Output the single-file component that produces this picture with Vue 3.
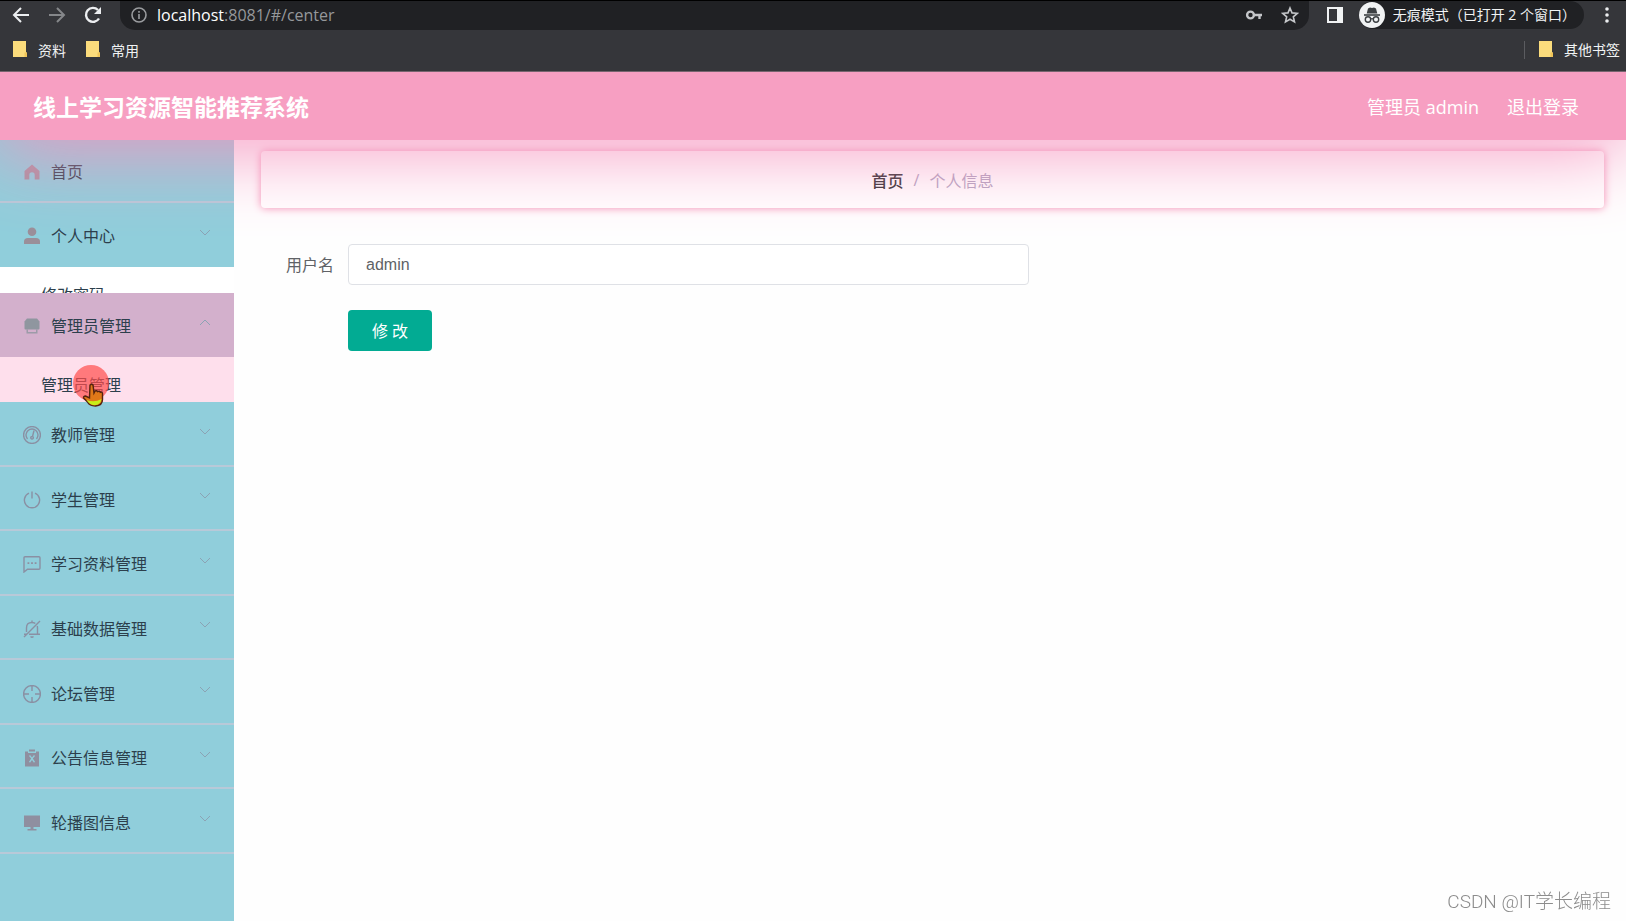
<template>
  <div class="page">
    <div class="browser">
      <div class="toolbar">
        <button class="tool" aria-label="后退">
          <svg width="18" height="18" viewBox="0 0 18 18" stroke="#eceef0" stroke-width="2">
            <path d="M17 9H2M9 2L2 9l7 7" />
          </svg>
        </button>
        <button class="tool" aria-label="前进">
          <svg width="18" height="18" viewBox="0 0 18 18" stroke="#85878a" stroke-width="2">
            <path d="M1 9h15M9 2l7 7-7 7" />
          </svg>
        </button>
        <button class="tool" aria-label="刷新">
          <svg width="18" height="18" viewBox="0 0 18 18">
            <path d="M15 12.5A7 7 0 1 1 14 4" stroke="#eceef0" stroke-width="2.4" />
            <path d="M17 1v7h-7z" fill="#eceef0" />
          </svg>
        </button>
        <div class="address">
          <svg width="16" height="16" viewBox="0 0 16 16" stroke="#9a9c9f" stroke-width="1.6">
            <circle cx="8" cy="8" r="7" />
            <path d="M8 7v5M8 4v1.8" />
          </svg>
          <span class="url"><b>localhost</b>:8081/#/center</span>
          <button class="tool" aria-label="密码">
            <svg width="18" height="18" viewBox="0 0 18 18" stroke="#c4c6c9" stroke-width="2.4">
              <circle cx="5.5" cy="9" r="3.4" />
              <path d="M9 9h8M14.5 9v4" />
            </svg>
          </button>
          <button class="tool" aria-label="收藏">
            <svg width="18" height="18" viewBox="0 0 18 18" stroke="#c4c6c9" stroke-width="1.6">
              <path d="M9 2l2 4.900 5.300.4-4 3.500 1.200 5.100L9 13.200l-4.500 2.700 1.200-5.100-4-3.500L7 6.900z" />
            </svg>
          </button>
        </div>
        <button class="tool side-panel" aria-label="侧边栏">
          <svg width="18" height="18" viewBox="0 0 18 18">
            <rect x="2" y="2" width="14" height="14" stroke="#f1f3f4" stroke-width="2" />
            <path d="M11 2h5v14h-5z" fill="#f1f3f4" />
          </svg>
        </button>
        <button class="incognito">
          <svg width="26" height="26" viewBox="0 0 26 26">
            <circle cx="13" cy="13" r="13" fill="#f1f3f4" />
            <path d="M9 6.500l2-1 2 .6 2-.6 2 1 1.300 5H7.700z" fill="#3c4043" />
            <path d="M5 13h16" stroke="#3c4043" stroke-width="1.6" />
            <g stroke="#3c4043" stroke-width="1.4">
              <circle cx="9" cy="17.5" r="2.7" />
              <circle cx="17" cy="17.5" r="2.7" />
              <path d="M11.700 17q1.300-.8 2.600 0" />
            </g>
          </svg>
          无痕模式（已打开 2 个窗口）
        </button>
        <button class="tool menu-dots" aria-label="菜单">
          <svg width="6" height="18" viewBox="0 0 6 18">
            <g fill="#eceef0">
              <circle cx="3" cy="3" r="1.8" />
              <circle cx="3" cy="9" r="1.8" />
              <circle cx="3" cy="15" r="1.8" />
            </g>
          </svg>
        </button>
      </div>
      <div class="bookmarks">
        <a v-for="name in bookmarks" :key="name" href="#" :class="{ other: name === '其他书签' }">
          <svg width="14" height="17" viewBox="0 0 14 17">
            <path d="M0 0h13v11l1 1v4H0z" fill="#fbdc7c" />
            <path d="M11.500 11.500h2.500v4.500h-2.500z" fill="#efc458" />
          </svg>
          {{ name }}
        </a>
      </div>
    </div>

    <header class="header">
      <h1>线上学习资源智能推荐系统</h1>
      <span class="user">管理员 admin</span>
      <a href="#" class="logout">退出登录</a>
    </header>

    <div class="body">
      <aside class="sidebar">
        <a href="#" class="menu-item home">
          <svg class="icon" viewBox="0 0 18 18">
            <path d="M9 1.500L1.500 8v8.500h4.800v-4.600a2.700 2.700 0 0 1 5.400 0v4.600h4.800V8z" fill="#a9919f" />
          </svg>
          首页
        </a>
        <button class="menu-item open-item">
          <svg class="icon" viewBox="0 0 18 18">
            <g fill="#9a8f99">
              <circle cx="9" cy="4.800" r="4.300" />
              <path d="M1 17v-2.500q0-3.500 4-3.500h8q4 0 4 3.500V17z" />
            </g>
          </svg>
          个人中心
          <svg class="arrow" viewBox="0 0 10 6"><path d="M0 0l5 5 5-5" /></svg>
        </button>
        <div class="submenu closing"><a href="#">修改密码</a></div>
        <button class="menu-item open-item active">
          <svg class="icon" viewBox="0 0 18 18">
            <g fill="#8f969f">
              <path d="M4 1.500h10l2.500 3v7q0 1-1 1H2.500q-1 0-1-1v-7z" />
              <path d="M3.500 12.500h1.500V15h8v-2.500h1.500v4h-11z" opacity=".8" />
            </g>
          </svg>
          管理员管理
          <svg class="arrow" viewBox="0 0 10 6"><path d="M0 5l5-5 5 5" /></svg>
        </button>
        <div class="submenu opening">
          <a href="#">管理员管理</a>
          <svg class="pointer" width="38" height="46" viewBox="0 0 38 46">
            <circle cx="19" cy="19" r="18" fill="#ff4d4d" fill-opacity=".7" />
            <path
              d="M18 21q2-1.500 3 0l1 8 1-2q2-.8 2.500.6 2.300-1 2.800.7 2-.6 2.200 1.200v6q0 6-7 6.500-6 0-8-4l-4-4q0-2 2-2l4 2z"
              fill="#e07818"
              stroke="#54220e"
              stroke-width="1.400"
            />
            <path d="M14.500 36q8 3 15-1-1 6-7 6.200-5-.3-8-5.200z" fill="#c8ee18" />
          </svg>
        </div>
        <div class="menu-rest">
          <button v-for="item in menus" :key="item.name" class="menu-item">
            <svg class="icon" viewBox="0 0 18 18" stroke="#8a90a3" stroke-width="1.400">
              <path :d="item.line" />
              <path v-if="item.solid" :d="item.solid" fill="#8f8fa0" stroke="none" fill-rule="evenodd" />
            </svg>
            {{ item.name }}
            <svg class="arrow" viewBox="0 0 10 6"><path d="M0 0l5 5 5-5" /></svg>
          </button>
        </div>
      </aside>

      <main class="main">
        <nav class="breadcrumb">
          <a href="#">首页</a>
          <span class="slash">/</span>
          <span>个人信息</span>
        </nav>
        <form class="form" @submit.prevent>
          <label for="username">用户名</label>
          <input id="username" v-model="username" type="text" />
          <button type="submit">修 改</button>
        </form>
      </main>
    </div>
    <div class="watermark">CSDN @IT学长编程</div>
  </div>
</template>

<script setup>
import { ref } from "vue";

const username = ref("admin");

const bookmarks = ["资料", "常用", "其他书签"];

const menus = [
  {
    name: "教师管理",
    line: "M9 .6a8.400 8.400 0 1 1 0 16.800A8.400 8.400 0 0 1 9 .6zM4.500 13A6 6 0 1 1 13.500 13M9.500 10.500l1.500-6M9 10.500a1.300 1.300 0 1 0 .1 0",
  },
  {
    name: "学生管理",
    line: "M9 .5v7M6 2.200a7.600 7.600 0 1 0 6 0",
  },
  {
    name: "学习资料管理",
    line: "M2 1.800h14q1 0 1 1v10.400q0 1-1 1H4.500L1 17V2.800q0-1 1-1z",
    solid: "M4.500 7.200h1.800v1.800H4.500zM8.100 7.200h1.800v1.800H8.100zM11.700 7.200h1.800v1.800h-1.800z",
  },
  {
    name: "基础数据管理",
    line: "M1 17L17 1M3.500 12V8q0-5.500 5.500-5.500 2 0 3.300 1M14.200 6q.3.800.3 2v6.300H6M1 14.300h2.500M14.500 14.300H17M9 .5v2M7.500 16.500q1.500 1.300 3 0",
  },
  {
    name: "论坛管理",
    line: "M9 .6a8.400 8.400 0 1 1 0 16.800A8.400 8.400 0 0 1 9 .6zM9 .6v5.400M9 12v5.400M.6 9H6M12 9h5.400",
  },
  {
    name: "公告信息管理",
    line: "",
    solid: "M2 2.500h3V4h8V2.500h3V17.500H2zM6 .5h6v2H6zM6 7l2.200 2.600L6 12.800l1 1 2-2.800 2 2.800 1-1-2.200-3.200L12 7l-1-1-2 2.400L7 6z",
  },
  {
    name: "轮播图信息",
    line: "",
    solid: "M1 1.500h16v11.500H1zM7.500 13h3v2h-3zM4.500 15h9v1.500h-9z",
  },
];
</script>

<style>
body {
  margin: 0;
}
</style>

<style scoped>
.page {
  min-height: 100vh;
  display: flex;
  flex-direction: column;
  background: #fefefe;
  font-family: "Open Sans", "Noto Sans CJK SC", sans-serif;
  font-size: 16px;
}

a {
  color: inherit;
  text-decoration: none;
}

button {
  margin: 0;
  padding: 0;
  border: 0;
  background: none;
  font: inherit;
  color: inherit;
}

svg {
  display: block;
  flex: none;
  fill: none;
}

.browser {
  height: 71px;
  border-bottom: 1px solid #77656f;
  background: #35363a;
  color: #f1f3f4;
  font-size: 14px;
}

.toolbar {
  display: flex;
  align-items: center;
  height: 27px;
  padding: 0 16px 0 12px;
  border-top: 1px solid #000;
}

.toolbar > .tool {
  margin-right: 18px;
}

.address {
  flex: 1;
  display: flex;
  align-items: center;
  align-self: flex-start;
  height: 27px;
  padding: 0 10px 2px 11px;
  border-radius: 0 0 15px 15px;
  background: #202124;
}

.url {
  flex: 1;
  padding-left: 10px;
  font-size: 16px;
  line-height: 26px;
  color: #96989b;
}

.url b {
  font-weight: 400;
  color: #fff;
}

.address .tool {
  margin-left: 18px;
}

.toolbar > .side-panel {
  margin: 0 15px 0 17px;
}

.incognito {
  display: flex;
  align-items: center;
  gap: 8px;
  height: 28px;
  padding-right: 8px;
  border-radius: 14px;
  background: #202124;
  line-height: 26px;
  white-space: nowrap;
}

.toolbar > .menu-dots {
  margin: 0 0 0 20px;
}

.bookmarks {
  display: flex;
  align-items: center;
  gap: 20px;
  height: 43px;
  padding: 0 6px 0 13px;
}

.bookmarks a {
  display: flex;
  align-items: center;
  gap: 11px;
}

.bookmarks .other {
  margin-left: auto;
  padding-left: 14px;
  border-left: 1px solid #5b5c60;
  line-height: 18px;
}

.header {
  position: relative;
  z-index: 1;
  display: flex;
  align-items: center;
  height: 68px;
  padding: 0 47px 0 33px;
  background: #f79fc2;
  box-shadow: 0 4px 80px 4px #f590bc;
  clip-path: inset(0 0 -120px 0);
  color: #fff;
  font-size: 18px;
}

.header h1 {
  flex: 1;
  margin: 0;
  font-size: 23px;
  font-weight: 700;
}

.logout {
  margin-left: 28px;
}

.body {
  flex: 1;
  display: flex;
}

.sidebar {
  width: 234px;
  flex: none;
  background: #90cedb;
  color: #2c3f4c;
}

.menu-item {
  display: flex;
  align-items: center;
  gap: 10px;
  box-sizing: border-box;
  width: 100%;
  height: 64px;
  padding: 0 24px 0 23px;
  border-bottom: 2px solid #b8c9d8;
}

.home {
  height: 63px;
}

.open-item {
  border-bottom: 0;
}

.active {
  background: #d3b0cc;
}

.icon {
  width: 18px;
  height: 18px;
  margin-top: 2px;
}

.arrow {
  width: 10px;
  height: 6px;
  margin: 0 0 5px auto;
  stroke: #8ba3b4;
  overflow: visible;
}

.submenu {
  position: relative;
  line-height: 56px;
}

.submenu a {
  display: block;
  height: 100%;
  padding-left: 41px;
  overflow: hidden;
}

.closing {
  height: 26px;
  background: #fff;
}

.opening {
  height: 45px;
  background: #fedfec;
}

/* the click marker floats over the submenu entry */
.pointer {
  position: absolute;
  left: 72px;
  top: 7px;
  z-index: 2;
}

.menu-rest {
  display: grid;
  grid-auto-rows: 1fr;
  height: 452px;
}

.menu-rest .menu-item {
  height: auto;
  padding-top: 2px;
}

.main {
  flex: 1;
  padding: 11px 22px 0 27px;
}

.breadcrumb {
  display: flex;
  align-items: center;
  justify-content: center;
  height: 57px;
  border-radius: 4px;
  background: #fff;
  box-shadow: 0 0 8px #f58fb4;
  color: #b3a6c2;
}

.breadcrumb a {
  font-weight: 500;
  color: #303133;
}

.slash {
  margin: 0 10px;
}

.form {
  display: grid;
  grid-template-columns: 73px 1fr;
  align-items: center;
  gap: 25px 14px;
  max-width: 768px;
  margin-top: 36px;
  color: #606266;
}

.form label {
  padding-bottom: 2px;
  text-align: right;
}

.form input {
  box-sizing: border-box;
  height: 41px;
  padding: 0 17px;
  border: 1px solid #dfe1e6;
  border-radius: 4px;
  background: #fff;
  color: #606266;
  font: 16px "Liberation Sans", Arial, sans-serif;
}

.form button {
  grid-column: 2;
  justify-self: start;
  width: 84px;
  height: 41px;
  padding-bottom: 2px;
  border-radius: 4px;
  background: #02ab93;
  color: #fff;
}

.watermark {
  position: fixed;
  right: 15px;
  bottom: 4px;
  color: #8c8c8c;
  font: 300 19px/30px Roboto, "Noto Sans CJK SC", sans-serif;
}
</style>
